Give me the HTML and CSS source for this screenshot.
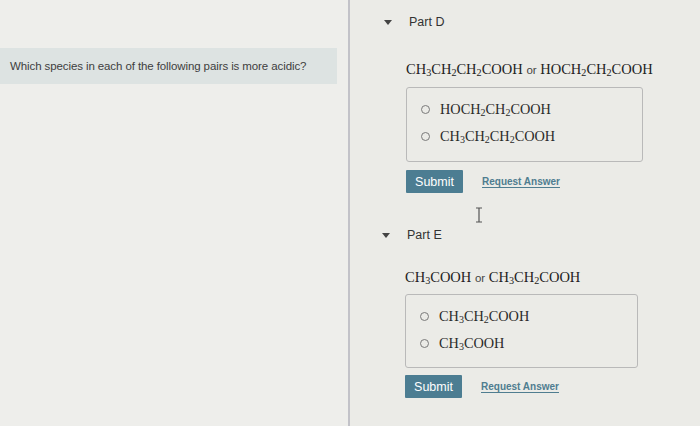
FILE: index.html
```html
<!DOCTYPE html>
<html>
<head>
<meta charset="utf-8">
<link rel="stylesheet" href="styles.css">
</head>
<body>
<div class="page">
  <aside class="left">
    <div class="question">Which species in each of the following pairs is more acidic?</div>
  </aside>
  <main class="right">
    <section class="part part-d">
      <div class="part-head"><span class="caret"></span><span class="part-title">Part D</span></div>
      <div class="formula">CH<sub>3</sub>CH<sub>2</sub>CH<sub>2</sub>COOH <span class="or">or</span> HOCH<sub>2</sub>CH<sub>2</sub>COOH</div>
      <div class="choices">
        <label class="choice"><span class="radio"></span><span class="chem">HOCH<sub>2</sub>CH<sub>2</sub>COOH</span></label>
        <label class="choice"><span class="radio"></span><span class="chem">CH<sub>3</sub>CH<sub>2</sub>CH<sub>2</sub>COOH</span></label>
      </div>
      <div class="actions">
        <button class="submit">Submit</button>
        <a class="request">Request Answer</a>
      </div>
    </section>
    <section class="part part-e">
      <div class="part-head"><span class="caret"></span><span class="part-title">Part E</span></div>
      <div class="formula">CH<sub>3</sub>COOH <span class="or">or</span> CH<sub>3</sub>CH<sub>2</sub>COOH</div>
      <div class="choices">
        <label class="choice"><span class="radio"></span><span class="chem">CH<sub>3</sub>CH<sub>2</sub>COOH</span></label>
        <label class="choice"><span class="radio"></span><span class="chem">CH<sub>3</sub>COOH</span></label>
      </div>
      <div class="actions">
        <button class="submit">Submit</button>
        <a class="request">Request Answer</a>
      </div>
    </section>
    <svg class="ibeam" width="8" height="16" viewBox="0 0 8 16"><path d="M1 1h6M4 1v14M1 15h6" stroke="#555" stroke-width="1.2" fill="none"/></svg>
  </main>
</div>
</body>
</html>
```
FILE: styles.css
```css
html, body {
  margin: 0;
  padding: 0;
}
body {
  width: 700px;
  height: 426px;
  overflow: hidden;
  background: #ebebe7;
  font-family: "Liberation Sans", Arial, sans-serif;
  color: #333;
}
.page {
  display: flex;
  height: 426px;
}
.left {
  width: 348px;
  flex: none;
  background: #eeeeeb;
  border-right: 2px solid #c2c2c8;
}
.question {
  margin-top: 48px;
  width: 327px;
  height: 36px;
  padding-left: 10px;
  line-height: 37px;
  background: #dde3e2;
  font-size: 11.5px;
  color: #3e3e3e;
  letter-spacing: -0.1px;
}
.right {
  position: relative;
  flex: 1;
  padding-left: 56px;
  background: #ebebe7;
}
.part-head {
  display: flex;
  align-items: center;
  height: 16px;
  margin-left: -22px;
}
.part-d .part-head { margin-top: 14px; }
.part-e .part-head { margin-top: 34px; margin-left: -24px; }
.caret {
  width: 0;
  height: 0;
  border-left: 4px solid transparent;
  border-right: 4px solid transparent;
  border-top: 5px solid #444;
  margin-right: 17px;
}
.part-title {
  font-size: 12.5px;
  color: #333;
}
.formula {
  font-family: "Liberation Serif", "Times New Roman", serif;
  font-size: 14.5px;
  line-height: 18px;
  color: #222;
}
.part-d .formula { margin-top: 30px; }
.part-e .formula { margin-top: 25px; margin-left: -1px; }
.or {
  font-family: "Liberation Sans", Arial, sans-serif;
  font-size: 11.5px;
  color: #444;
}
sub {
  font-size: 70%;
  vertical-align: -2px;
  line-height: 0;
}
.choices {
  margin-top: 8px;
  box-sizing: border-box;
  border: 1px solid #b9b9b9;
  border-radius: 3px;
  padding: 12px 0 0 14px;
  display: flex;
  flex-direction: column;
  gap: 9px;
}
.part-d .choices { width: 237px; height: 75px; }
.part-e .choices { width: 233px; height: 74px; margin-top: 7px; margin-left: -1px; }
.choice {
  display: flex;
  align-items: center;
  height: 18px;
}
.radio {
  width: 7px;
  height: 7px;
  border: 1.5px solid #7a7a7a;
  border-radius: 50%;
  margin-right: 10px;
  flex: none;
}
.chem {
  font-family: "Liberation Serif", "Times New Roman", serif;
  font-size: 14.3px;
  color: #2a2a2a;
}
.actions {
  display: flex;
  align-items: center;
  margin-top: 8px;
  gap: 19px;
}
.part-e .actions { margin-top: 7px; margin-left: -1px; }
.submit {
  width: 57px;
  height: 23px;
  border: none;
  border-radius: 1px;
  background: #4c7d92;
  color: #fff;
  font-family: "Liberation Sans", Arial, sans-serif;
  font-size: 12.5px;
  padding: 0;
}
.request {
  font-family: "Liberation Sans", Arial, sans-serif;
  font-size: 10px;
  font-weight: bold;
  color: #4f7d90;
  text-decoration: underline;
  text-underline-offset: 2px;
}
.ibeam {
  position: absolute;
  left: 125px;
  top: 207px;
}
```
